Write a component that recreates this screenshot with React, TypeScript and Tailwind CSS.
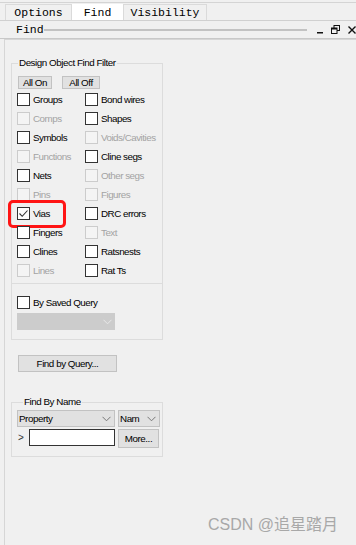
import type { ReactNode } from "react";

const uiFont = { fontFamily: '"Liberation Sans", Arial, sans-serif' };
const monoFont = { fontFamily: '"Liberation Mono", "DejaVu Sans Mono", monospace' };

type Item = { label: string; disabled?: boolean; checked?: boolean; mark?: boolean };

const left: Item[] = [
  { label: "Groups" },
  { label: "Comps", disabled: true },
  { label: "Symbols" },
  { label: "Functions", disabled: true },
  { label: "Nets" },
  { label: "Pins", disabled: true },
  { label: "Vias", checked: true, mark: true },
  { label: "Fingers" },
  { label: "Clines" },
  { label: "Lines", disabled: true },
];

const right: Item[] = [
  { label: "Bond wires" },
  { label: "Shapes" },
  { label: "Voids/Cavities", disabled: true },
  { label: "Cline segs" },
  { label: "Other segs", disabled: true },
  { label: "Figures", disabled: true },
  { label: "DRC errors" },
  { label: "Text", disabled: true },
  { label: "Ratsnests" },
  { label: "Rat Ts" },
];

function Box({ disabled, checked }: { disabled?: boolean; checked?: boolean }) {
  return (
    <span
      className={
        "flex h-[13px] w-[13px] shrink-0 items-center justify-center border " +
        (disabled ? "border-[#cccccc] bg-[#f4f4f4]" : "border-[#333333] bg-white")
      }
    >
      {checked && (
        <svg width="11" height="11" viewBox="0 0 11 11">
          <path d="M1.5 5.5 L4.2 8.3 L9.5 2.5" fill="none" stroke="#333" strokeWidth="1.1" />
        </svg>
      )}
    </span>
  );
}

function Check({ item }: { item: Item }) {
  return (
    <div className="relative flex h-[19px] items-center">
      <Box disabled={item.disabled} checked={item.checked} />
      <span
        className={
          "ml-[3px] text-[9.8px] leading-none tracking-[-0.5px] " + (item.disabled ? "text-[#a3a3a3]" : "text-black")
        }
      >
        {item.label}
      </span>
      {item.mark && (
        <span className="pointer-events-none absolute left-[-9px] top-[-4px] h-[28px] w-[58px] rounded-[5px] border-[3px] border-[#ff1414]" />
      )}
    </div>
  );
}

function Chevron({ color = "#777" }: { color?: string }) {
  return (
    <svg width="9" height="6" viewBox="0 0 9 6">
      <path d="M0.5 0.8 L4.5 4.8 L8.5 0.8" fill="none" stroke={color} strokeWidth="1" />
    </svg>
  );
}

function Btn({ className, children }: { className: string; children: ReactNode }) {
  return (
    <div
      className={
        "flex items-center justify-center border border-[#c2c2c2] bg-[#e1e1e1] text-[9.8px] leading-none tracking-[-0.45px] text-black " +
        className
      }
    >
      {children}
    </div>
  );
}

function Group({ title, className, children }: { title: string; className: string; children: ReactNode }) {
  return (
    <fieldset className={"w-[152px] border border-[#dcdcdc] " + className}>
      <legend className="ml-[6px] px-[1px] text-[9.8px] leading-[12px] tracking-[-0.45px] text-black">{title}</legend>
      {children}
    </fieldset>
  );
}

function Select({ label, className }: { label: string; className: string }) {
  return (
    <div
      className={
        "flex h-[17px] items-center justify-between border border-[#c2c2c2] bg-[#e1e1e1] pl-[1px] pr-[3px] text-[9.8px] leading-none tracking-[-0.45px] " +
        className
      }
    >
      <span>{label}</span>
      <Chevron />
    </div>
  );
}

export default function App() {
  return (
    <div className="relative flex h-[545px] w-[356px] flex-col overflow-hidden bg-[#f0f0f0]" style={uiFont}>
      <div className="mt-[2px] h-[2px] border-t border-[#d4d4d4]" />

      <div className="flex h-[17px] border-b border-[#d0d0d0] pl-[5px] text-[11.5px] leading-none" style={monoFont}>
        <div className="flex w-[67px] items-center justify-center border border-b-0 border-[#dadada] pt-[1px]">Options</div>
        <div className="flex w-[51px] items-center justify-center bg-white pt-[1px]">Find</div>
        <div className="flex w-[84px] items-center justify-center border border-b-0 border-[#dadada] pt-[1px]">Visibility</div>
      </div>

      <div className="flex h-[18px] items-center border-b border-[#c8c8c8] pl-[16px]">
        <span className="text-[11.5px] leading-none" style={monoFont}>Find</span>
        <div className="h-[2px] w-[270px] bg-[#c2c2c2]" />
        <div className="ml-[10px] flex items-center gap-[8px]">
          <svg width="6" height="8" viewBox="0 0 6 8">
            <rect x="0" y="6" width="6" height="1.5" fill="#111" />
          </svg>
          <svg width="9" height="9" viewBox="0 0 9 9">
            <rect x="3" y="0.5" width="5.5" height="5" fill="none" stroke="#111" strokeWidth="1" />
            <rect x="0.5" y="3" width="5.5" height="5.5" fill="#f0f0f0" stroke="#111" strokeWidth="1" />
            <rect x="0.5" y="3" width="5.5" height="1.5" fill="#111" />
          </svg>
          <svg width="8" height="8" viewBox="0 0 8 8">
            <path d="M0.5 0.5 L7.5 7.5 M7.5 0.5 L0.5 7.5" stroke="#111" strokeWidth="1.4" />
          </svg>
        </div>
      </div>

      <div className="ml-[4px] flex-1 border-l border-t border-[#d6d6d6] pl-[6px] pt-[17px]">
        <Group title="Design Object Find Filter" className="">
          <div className="flex gap-[10px] pl-[6px] pt-[7px]">
            <Btn className="h-[13px] w-[34px]">All On</Btn>
            <Btn className="h-[13px] w-[38px]">All Off</Btn>
          </div>
          <div className="grid grid-cols-[68px_1fr] pl-[5px] pt-[1px]">
            <div className="flex flex-col">
              {left.map((it) => (
                <Check key={it.label} item={it} />
              ))}
            </div>
            <div className="flex flex-col">
              {right.map((it) => (
                <Check key={it.label} item={it} />
              ))}
            </div>
          </div>
          <div className="mt-[3px] border-t border-[#dcdcdc] pb-[9px] pl-[5px] pt-[9px]">
            <Check item={{ label: "By Saved Query" }} />
            <div className="mt-[1px] flex h-[17px] w-[98px] items-center justify-end bg-[#cccccc] pr-[3px]">
              <Chevron color="#e8e8e8" />
            </div>
          </div>
        </Group>

        <Btn className="ml-[7px] mt-[15px] h-[17px] w-[99px]">Find by Query...</Btn>

        <Group title="Find By Name" className="mt-[24px] pb-[8px] pl-[5px] pt-[2px]">
          <div className="flex gap-[3px]">
            <Select label="Property" className="w-[98px]" />
            <Select label="Nam" className="w-[42px]" />
          </div>
          <div className="mt-[2px] flex items-start gap-[3px]">
            <div className="flex h-[17px] w-[9px] items-center pl-[1px] text-[10px] text-[#333]">&gt;</div>
            <div className="h-[17px] w-[86px] border border-[#333] bg-white" />
            <Btn className="h-[19px] w-[41px]">More...</Btn>
          </div>
        </Group>
      </div>

      <div
        className="pointer-events-none absolute left-[208px] top-[514px] text-[16px] leading-[22px] text-[#a8a8a8]"
        style={{ fontFamily: '"Liberation Sans", "Noto Sans CJK SC", sans-serif' }}
      >
        CSDN @追星踏月
      </div>
    </div>
  );
}
